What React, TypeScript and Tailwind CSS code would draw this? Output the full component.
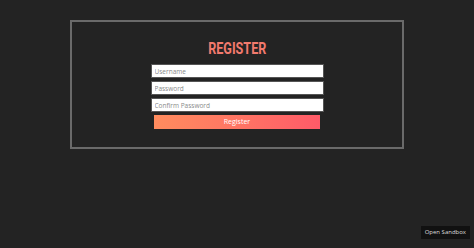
export default function App() {
  return (
    <div className="relative h-[248px] w-full bg-[#232323] pt-5 font-['Open_Sans',sans-serif]">
      <div className="mx-auto flex h-[129px] w-[334px] flex-col items-center border-2 border-[#6a6a6a] pt-[16px]">
        <h1 className="inline-block origin-center scale-x-[0.74] text-[17px] font-bold leading-[20px] text-[#f27a6e] [font-family:Roboto,sans-serif]">
          REGISTER
        </h1>
        <form className="mt-[6px] flex w-[173px] flex-col gap-[3px]">
          <input
            placeholder="Username"
            className="h-[14px] w-full border border-[#555] bg-white px-[3px] text-[6.5px] text-gray-700 outline-none placeholder:text-[#8a8a8a]"
          />
          <input
            placeholder="Password"
            className="h-[14px] w-full border border-[#555] bg-white px-[3px] text-[6.5px] text-gray-700 outline-none placeholder:text-[#8a8a8a]"
          />
          <input
            placeholder="Confirm Password"
            className="h-[14px] w-full border border-[#555] bg-white px-[3px] text-[6.5px] text-gray-700 outline-none placeholder:text-[#8a8a8a]"
          />
          <button
            type="button"
            className="mx-auto h-[14px] w-[166px] bg-gradient-to-r from-[#ff8c5e] to-[#ff5a68] text-[7px] leading-[14px] text-white"
          >
            Register
          </button>
        </form>
      </div>
      <div className="absolute bottom-[9px] right-[4px] flex h-[13px] items-center bg-[#111] px-[4px] text-[6px] text-[#ddd]">
        Open Sandbox
      </div>
    </div>
  );
}
